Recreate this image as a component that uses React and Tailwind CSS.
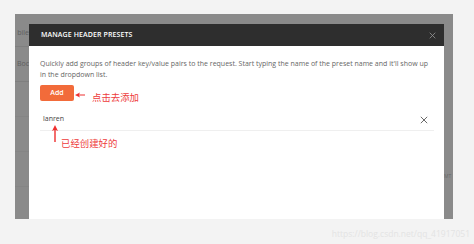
import React from 'react'

const font = { fontFamily: '"Open Sans", "Noto Sans CJK SC", sans-serif' }

const Cross = ({ size = 8, className = '' }) => (
  <svg width={size} height={size} viewBox="0 0 10 10" className={className}>
    <path d="M1 1 L9 9 M9 1 L1 9" stroke="currentColor" strokeWidth="1.1" fill="none" />
  </svg>
)

const App = () => {
  return (
    <div
      className="relative h-[244px] w-[474px] overflow-hidden bg-[#f3f3f3] pl-[15px] pt-[14px]"
      style={font}
    >
      <div className="flex h-[205px] w-[438px] bg-[#8a8a8a]">
        {/* page behind the backdrop */}
        <div className="flex w-[14px] flex-col overflow-hidden text-[7px] text-[#5e5e5e]">
          <div className="flex h-[33px] items-end justify-end border-b border-[#7f7f7f] pb-[8px]">bile</div>
          <div className="flex h-[35px] items-center justify-start border-b border-[#7f7f7f] pl-[2px]">Boc</div>
          <div className="h-[35px] border-b border-[#858585]" />
          <div className="h-[35px] border-b border-[#858585]" />
          <div className="h-[35px] border-b border-[#858585]" />
        </div>

        <div className="mt-[10px] flex h-[195px] w-[415px] flex-col bg-white">
          <div className="flex h-[22px] items-center justify-between bg-[#2e2e2e] pl-[12px] pr-[8px]">
            <span className="text-[7px] font-semibold tracking-[0.1px] text-white">MANAGE HEADER PRESETS</span>
            <Cross size={7} className="text-[#9a9a9a]" />
          </div>

          <div className="flex flex-col pl-[11px] pr-[10px] pt-[12px]">
            <p className="text-[7px] leading-[11px] text-[#666]">
              Quickly add groups of header key/value pairs to the request. Start typing the name of the preset name and it'll show up in the dropdown list.
            </p>

            <div className="mt-[5px] flex h-[16px] items-start">
              <button
                type="button"
                className="flex h-[16px] w-[34px] items-center justify-center rounded-[2px] bg-[#f26b3a] text-[7px] font-semibold text-white"
              >
                Add
              </button>
              <svg width="10" height="6" viewBox="0 0 10 6" className="ml-[1px] mt-[7px]">
                <path d="M0 3 L5 0.5 L4 2.4 L10 2.4 L10 3.6 L4 3.6 L5 5.5 Z" fill="#ee3030" />
              </svg>
              <span className="ml-[7px] mt-[8px] text-[9.4px] leading-[10px] text-[#ee3b3b]">点击去添加</span>
            </div>

            <div className="mt-[8px] flex h-[22px] items-center justify-between border-b border-[#efefef] pl-[3px] pr-[6px]">
              <span className="text-[7px] text-[#444]">lanren</span>
              <Cross size={8} className="text-[#555]" />
            </div>

            <div className="flex h-[20px] items-start pl-[12px]">
              <svg width="6" height="17" viewBox="0 0 6 17" className="-mt-[6px]">
                <path d="M3 0 L6 6 L3.7 5 L3.7 17 L2.3 17 L2.3 5 L0 6 Z" fill="#ee3030" />
              </svg>
              <span className="ml-[3px] mt-[8px] text-[9.4px] leading-[10px] text-[#ee3b3b]">已经创建好的</span>
            </div>
          </div>
        </div>

        <div className="flex w-[9px] items-center justify-start overflow-hidden pt-[120px] text-[5px] text-[#6a6a6a]">
          <span>MT</span>
        </div>
      </div>

      <div className="absolute bottom-[3px] right-[4px] text-[8.5px] text-[#e3e3e3]">
        https://blog.csdn.net/qq_41917051
      </div>
    </div>
  )
}

export default App
